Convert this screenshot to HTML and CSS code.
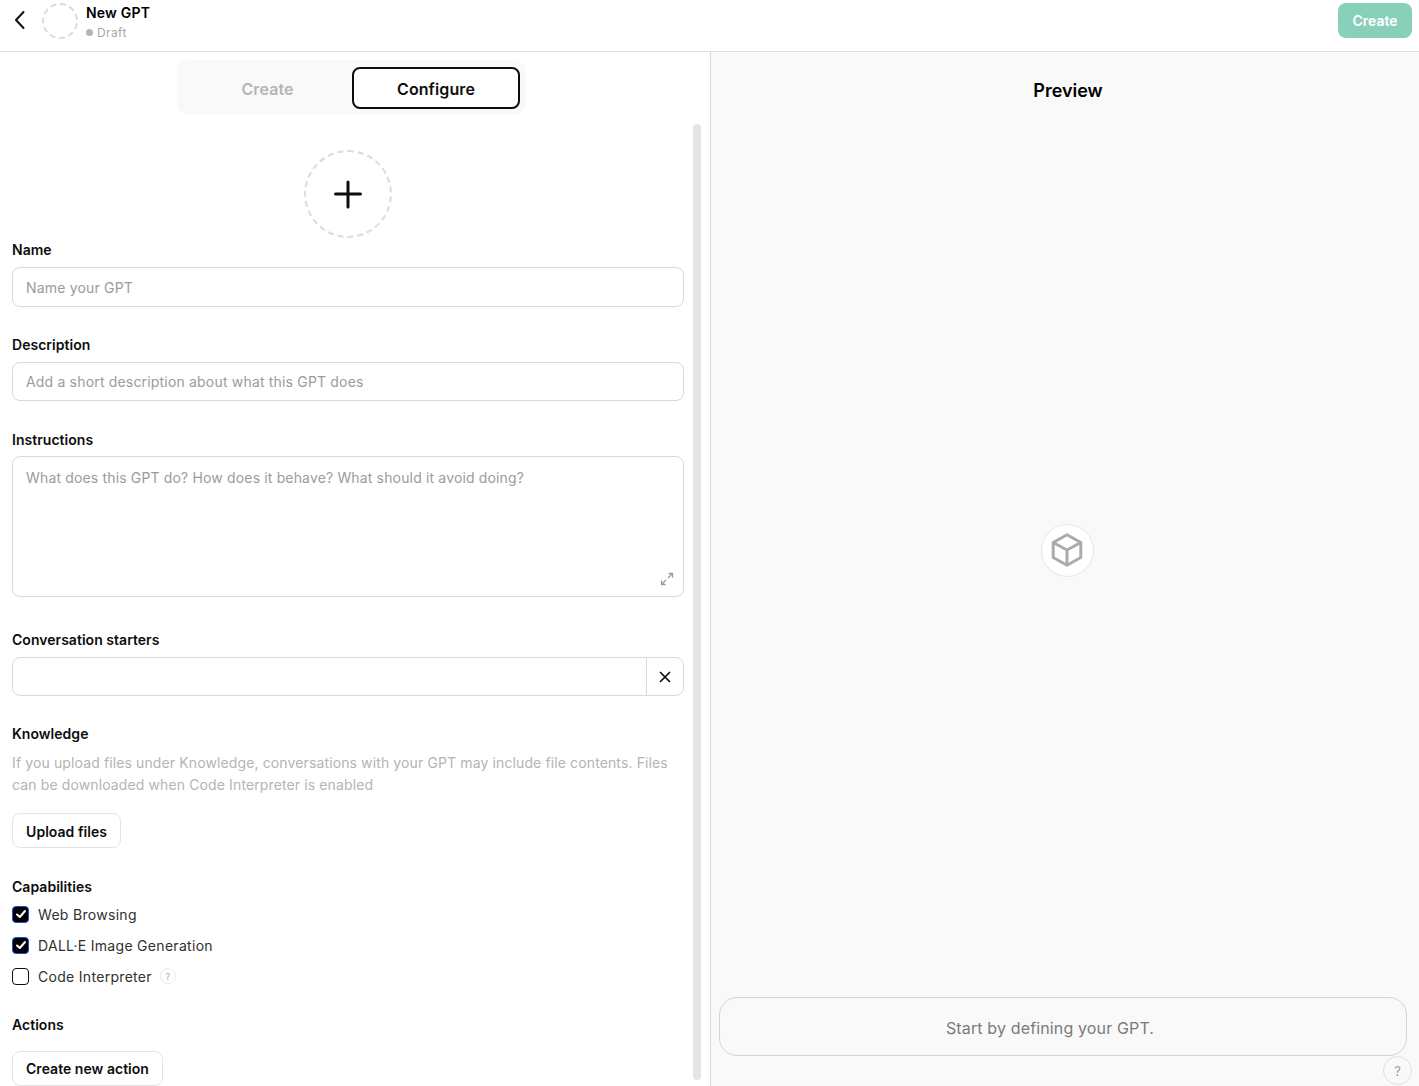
FILE: index.html
```html
<!DOCTYPE html>
<html lang="en">
<head>
<meta charset="utf-8">
<title>New GPT</title>
<link rel="stylesheet" href="styles.css">
</head>
<body>
<header class="topbar">
  <div class="top-left">
    <svg class="back" width="24" height="24" viewBox="0 0 24 24" fill="none" stroke="#0d0d0d" stroke-width="2" stroke-linecap="round" stroke-linejoin="round"><path d="M15.500 4 8 12l7.500 8"/></svg>
    <div class="mini-avatar"></div>
    <div class="title-block">
      <div class="title">New GPT</div>
      <div class="draft"><span class="dot"></span>Draft</div>
    </div>
  </div>
  <button class="create-btn">Create</button>
</header>
<main class="split">
  <section class="left">
    <div class="tabs-row">
      <div class="tabs">
        <div class="tab">Create</div>
        <div class="tab active">Configure</div>
      </div>
    </div>
    <div class="scroller">
      <form class="form">
        <div class="avatar-row">
          <div class="avatar">
            <svg width="30" height="30" viewBox="0 0 30 30" fill="none" stroke="#0d0d0d" stroke-width="3" stroke-linecap="round"><path d="M15 3v25M2.500 15h25"/></svg>
          </div>
        </div>
        <label class="label first">Name</label>
        <div class="field h40">Name your GPT</div>
        <label class="label">Description</label>
        <div class="field h39">Add a short description about what this GPT does</div>
        <label class="label instr">Instructions</label>
        <div class="field area">What does this GPT do? How does it behave? What should it avoid doing?
          <svg class="expand" width="14" height="14" viewBox="0 0 14 14" fill="none" stroke="#9b9b9b" stroke-width="1.300"><path d="M8 6l4.500-4.500M8.500 1.500h4v4M6 8l-4.500 4.500M1.500 8.500v4h4"/></svg>
        </div>
        <label class="label starters">Conversation starters</label>
        <div class="starter-row">
          <div class="starter-input"></div>
          <div class="starter-x">
            <svg width="12" height="12" viewBox="0 0 12 12" fill="none" stroke="#0d0d0d" stroke-width="1.700" stroke-linecap="round"><path d="M1.500 1.500l9 9M10.500 1.500l-9 9"/></svg>
          </div>
        </div>
        <label class="label knowledge">Knowledge</label>
        <p class="help">If you upload files under Knowledge, conversations with your GPT may include file contents. Files can be downloaded when Code Interpreter is enabled</p>
        <button type="button" class="outline upload">Upload files</button>
        <label class="label caps">Capabilities</label>
        <div class="check-row">
          <span class="box on"><svg width="12" height="12" viewBox="0 0 12 12" fill="none" stroke="#fff" stroke-width="2" stroke-linecap="round" stroke-linejoin="round"><path d="M2 6.500l2.800 2.500L10 3"/></svg></span>Web Browsing
        </div>
        <div class="check-row">
          <span class="box on"><svg width="12" height="12" viewBox="0 0 12 12" fill="none" stroke="#fff" stroke-width="2" stroke-linecap="round" stroke-linejoin="round"><path d="M2 6.500l2.800 2.500L10 3"/></svg></span>DALL·E Image Generation
        </div>
        <div class="check-row">
          <span class="box"></span>Code Interpreter<span class="hint">?</span>
        </div>
        <label class="label actions">Actions</label>
        <button type="button" class="outline action">Create new action</button>
      </form>
    </div>
  </section>
  <section class="right">
    <h2 class="preview">Preview</h2>
    <div class="preview-center">
      <div class="cube">
        <svg width="32" height="34" viewBox="0 0 32 34" fill="none" stroke="#ababab" stroke-width="3" stroke-linejoin="round"><path d="M16 1.800 29.800 9.500v15L16 32.200 2.200 24.500v-15z"/><path d="M2.200 9.500 16 17l13.800-7.500M16 17v15.200"/></svg>
      </div>
    </div>
    <div class="prompt">Start by defining your GPT.</div>
    <div class="help-btn">?</div>
  </section>
</main>
</body>
</html>
```
FILE: styles.css
```css
* { box-sizing: border-box; }
html, body { margin: 0; height: 1086px; overflow: hidden; }
body { background: #fff; color: #0d0d0d; font-family: Inter, "Liberation Sans", sans-serif; font-size: 14px; letter-spacing: -0.1px; }

.topbar { height: 52px; border-bottom: 1px solid #dedede; display: flex; align-items: flex-start; justify-content: space-between; padding: 3px 7px 0 8px; }
.top-left { display: flex; align-items: flex-start; }
.back { margin-top: 5px; }
.mini-avatar { width: 36px; height: 36px; border: 2px dashed #dcdcdc; border-radius: 50%; margin: 0 8px 0 10px; flex: none; }
.title { font-size: 14px; font-weight: 600; line-height: 20px; letter-spacing: 0.2px; color: #000; }
.draft { display: flex; align-items: center; font-size: 12px; line-height: 18px; color: #a8a8a8; margin-top: 1px; letter-spacing: 0.4px; }
.dot { width: 7px; height: 7px; border-radius: 50%; background: #b4b4b4; margin-right: 4px; margin-top: -2px; }
.create-btn { width: 74px; height: 35px; border: 0; border-radius: 8px; background: #88d0b9; color: #fff; font: 600 14px Inter, "Liberation Sans", sans-serif; letter-spacing: 0; }

.split { display: flex; height: 1034px; }
.left { width: 711px; border-right: 1px solid #d9d9d9; position: relative; flex: none; }
.tabs-row { display: flex; padding: 8px 0 0 177px; height: 72px; }
.tabs { width: 349px; height: 55px; background: #f9f9f9; border-radius: 12px; padding: 7px 6px 6px 7px; display: flex; gap: 7px; }
.tab { flex: 1; display: flex; align-items: center; justify-content: center; font-size: 16px; font-weight: 600; letter-spacing: 0.1px; padding-top: 2px; color: #b4b4b4; border-radius: 8px; border: 2px solid transparent; padding-left: 6px; }
.tab.active { flex: none; width: 168px; background: #fff; border-color: #0d0d0d; color: #0d0d0d; padding-left: 0; }

.scroller { height: 956px; position: relative; }
.scroller::after { content: ""; position: absolute; left: 693px; top: 0; width: 8px; height: 956px; background: #e5e5e5; border-radius: 4px; }
.form { width: 696px; padding: 26px 12px 0 12px; }
.avatar-row { display: flex; justify-content: center; }
.avatar { width: 88px; height: 88px; border: 2px dashed #dcdcdc; border-radius: 50%; display: flex; align-items: center; justify-content: center; }
.label { display: block; font-size: 14px; font-weight: 600; line-height: 20px; letter-spacing: 0.03px; margin-top: 28px; margin-bottom: 7px; }
.label.first { margin-top: 2px; }
.label.instr { margin-top: 29px; margin-bottom: 6px; }
.field { border: 1px solid #d9d9d9; border-radius: 8px; padding: 0 13px; color: #9b9b9b; font-size: 14px; letter-spacing: 0.18px; display: flex; align-items: center; }
.h40 { height: 40px; }
.h39 { height: 39px; }
.area { height: 141px; align-items: flex-start; padding-top: 11px; line-height: 20px; letter-spacing: 0.155px; position: relative; }
.expand { position: absolute; right: 9px; bottom: 10px; }
.label.starters { margin-top: 33px; margin-bottom: 7px; }
.starter-row { display: flex; height: 39px; border: 1px solid #d9d9d9; border-radius: 8px; }
.starter-input { flex: 1; }
.starter-x { width: 37px; border-left: 1px solid #d9d9d9; display: flex; align-items: center; justify-content: center; }
.label.knowledge { margin-top: 28px; margin-bottom: 8px; }
.help { margin: 0; color: #b4b4b4; font-size: 14px; line-height: 22px; width: 664px; letter-spacing: 0.12px; }
.outline { display: block; background: #fff; border: 1px solid #e3e3e3; border-radius: 8px; font: 600 14px Inter, "Liberation Sans", sans-serif; letter-spacing: 0.03px; color: #0d0d0d; padding: 1px 0 0; height: 35px; }
.upload { margin-top: 17px; width: 109px; }
.label.caps { margin-top: 29px; margin-bottom: 7px; }
.check-row { display: flex; align-items: center; height: 20px; margin-bottom: 11px; font-size: 14px; letter-spacing: 0.3px; color: #303030; }
.box { width: 17px; height: 17px; border: 1px solid #0d0d0d; border-radius: 4px; margin-right: 9px; flex: none; display: flex; align-items: center; justify-content: center; }
.box.on { background: #000; border-color: #1d4ed8; }
.hint { width: 16px; height: 16px; margin-left: 8px; border: 1px solid #ececec; border-radius: 50%; font-size: 9px; color: #a8a8a8; display: flex; align-items: center; justify-content: center; }
.label.actions { margin-top: 29px; margin-bottom: 16px; }
.action { width: 151px; padding: 0; }

.right { flex: 1; background: #f9f9f9; display: flex; flex-direction: column; position: relative; min-width: 0; }
.preview { margin: 25px 0 0; text-align: center; font-size: 18px; line-height: 28px; font-weight: 600; letter-spacing: 0; color: #000; padding-left: 6px; }
.preview-center { flex: 1; display: flex; align-items: center; justify-content: center; padding: 0 0 2px 4px; }
.cube { width: 53px; height: 53px; border: 1px solid #e6e6e6; border-radius: 50%; background: #fff; display: flex; align-items: center; justify-content: center; }
.prompt { height: 59px; margin: 0 12px 30px 8px; border: 1px solid #d4d4d4; border-radius: 18px; display: flex; align-items: center; justify-content: center; font-size: 16px; letter-spacing: 0.14px; color: #7b7b7b; padding: 2px 26px 0 0; }
.help-btn { position: absolute; right: 7px; bottom: 1px; width: 29px; height: 29px; border: 1px solid #e0e0e0; border-radius: 50%; background: #f9f9f9; color: #9b9b9b; font-size: 13px; display: flex; align-items: center; justify-content: center; }
```
